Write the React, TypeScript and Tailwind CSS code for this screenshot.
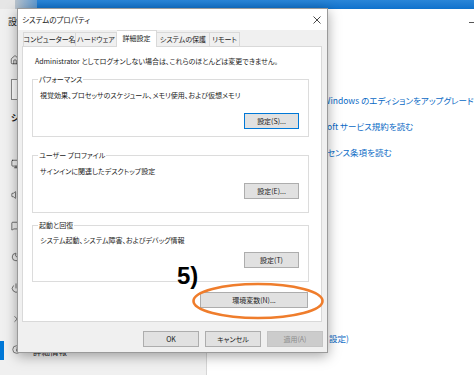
import { Home, Monitor, Volume2, MessageSquare, Moon, Power, ChevronRight, Info } from 'lucide-react';

function Btn({ label, className, focused, disabled }: { label: string; className: string; focused?: boolean; disabled?: boolean }) {
  return (
    <div
      className={`flex items-center justify-center h-[16px] border text-[7px] leading-none whitespace-nowrap ${
        disabled
          ? 'bg-[#cccccc] border-[#c4c4c4] text-[#8d8d8d]'
          : focused
          ? 'bg-[#e1e1e1] border-[#0078d7] text-[#1a1a1a]'
          : 'bg-[#e1e1e1] border-[#adadad] text-[#1a1a1a]'
      } ${className}`}
    >
      {label}
    </div>
  );
}

interface GroupProps {
  title: string;
  text: string;
  button: React.ReactNode;
  className: string;
  textClass: string;
  btnClass: string;
}

function Group({ title, text, button, className, textClass, btnClass }: GroupProps) {
  return (
    <div className={`relative ml-[9px] w-[277px] border border-[#dcdcdc] flex flex-col ${className}`}>
      <span className="absolute -top-[6px] left-[5px] bg-white px-[1px] text-[7px] leading-[10px] whitespace-nowrap">{title}</span>
      <p className={`ml-[7px] text-[7px] leading-[10px] whitespace-nowrap ${textClass}`}>{text}</p>
      <div className={`self-end mr-[9px] ${btnClass}`}>{button}</div>
    </div>
  );
}

// sidebar icons; their labels sit under the dialog and aren't visible
const navIcons = [Monitor, Volume2, MessageSquare, Moon, Power, ChevronRight];

const tabs = [
  { label: 'コンピューター名', w: 'w-[53px]' },
  { label: 'ハードウェア', w: 'w-[41px]' },
  { label: '詳細設定', w: 'w-[40px]', active: true },
  { label: 'システムの保護', w: 'w-[53px]' },
  { label: 'リモート', w: 'w-[30px]' },
];

export default function App() {
  return (
    <div className="relative w-[474px] h-[375px] overflow-hidden bg-white text-[#1a1a1a] font-['Noto_Sans_CJK_JP',sans-serif] [font-feature-settings:'palt']">
      {/* top strip */}
      <div className="flex h-[9px]">
        <div className="w-[15px] bg-[#e6e6e6]" />
        <div className="w-[22px] bg-gradient-to-r from-[#b9c3cc] to-[#5f9ad0]" />
        <div className="flex-1 bg-gradient-to-b from-[#2a86d8] to-[#0f72cc]" />
      </div>

      {/* settings window behind */}
      <div className="flex h-[366px]">
        <div className="w-[207px] bg-[#f0f0f0] border-r border-[#d6d6d6] flex flex-col">
          <div className="h-[26px] flex items-center pl-[8px] text-[9px]">設</div>
          <div className="mt-[15px] h-[20px] flex items-center pl-[10px]">
            <Home size={10} strokeWidth={1.4} />
          </div>
          <div className="mt-[9px] ml-[11px] w-[180px] h-[21px] border border-[#8a8a8a] bg-white" />
          <div className="mt-[13px] h-[10px] pl-[11px] text-[9px] leading-[10px] font-semibold">シ</div>
          <div className="mt-[25px] flex flex-col">
            {navIcons.map((Icon, i) => (
              <div key={i} className="h-[31px] flex items-center pl-[11px]">
                <Icon size={10} strokeWidth={1.4} />
              </div>
            ))}
            <div className="relative h-[31px] flex items-center pl-[12px] gap-[12px] text-[8.5px]">
              <div className="absolute left-0 top-[7px] w-[4px] h-[19px] bg-[#0078d7]" />
              <Info size={9} strokeWidth={1.4} />
              <span className="mt-[4px]">詳細情報</span>
            </div>
          </div>
        </div>

        <div className="flex-1 flex flex-col">
          <div className="h-[26px] flex items-center justify-end">
            <div className="w-[5px] h-px bg-[#555]" />
          </div>
          <div className="pl-[116px] flex flex-col text-[8.5px] leading-[10px] text-[#0a6ac5] whitespace-nowrap">
            <span className="mt-[60px]">Windows のエディションをアップグレード</span>
            <span className="mt-[16px] pl-[4px]">oft サービス規約を読む</span>
            <span className="mt-[16px] pl-[4px]">センス条項を読む</span>
            <span className="mt-[176px] pl-[6px]">設定)</span>
          </div>
        </div>
      </div>

      {/* System properties dialog */}
      <div className="absolute left-[17px] top-[8px] w-[311px] h-[345px] border border-[#9a9a9a] bg-[#f0f0f0] flex flex-col shadow-[0_3px_12px_rgba(0,0,0,0.35)]">
        <div className="h-[21px] bg-white flex items-center justify-between pl-[4px] pr-[6px]">
          <span className="text-[7.5px] leading-none">システムのプロパティ</span>
          <svg width="8" height="8" viewBox="0 0 8 8" className="text-[#333]">
            <path d="M0.5 0.5 L7.5 7.5 M7.5 0.5 L0.5 7.5" stroke="currentColor" strokeWidth="0.9" fill="none" />
          </svg>
        </div>

        <div className="mt-[1px] ml-[5px] h-[16px] flex items-end relative z-10 -mb-px text-[7px] leading-none whitespace-nowrap">
          {tabs.map((t, i) => (
            <div
              key={t.label}
              className={`${t.w} border border-b-0 border-[#d9d9d9] flex items-center justify-center ${i > 0 ? 'border-l-0' : ''} ${
                t.active ? 'h-[17px] pb-px bg-white' : 'h-[14px] mb-px'
              }`}
            >
              {t.label}
            </div>
          ))}
        </div>

        <div className="ml-[4px] w-[300px] h-[276px] bg-white border border-[#d9d9d9] flex flex-col">
          <p className="mt-[9px] ml-[12px] text-[7px] leading-[10px] whitespace-nowrap">
            Administrator としてログオンしない場合は、これらのほとんどは変更できません。
          </p>
          <Group
            title="パフォーマンス"
            text="視覚効果、プロセッサのスケジュール、メモリ使用、および仮想メモリ"
            className="mt-[13px] h-[58px]"
            textClass="mt-[10px]"
            btnClass="mt-[13px]"
            button={<Btn label="設定(S)..." className="w-[55px]" focused />}
          />
          <Group
            title="ユーザー プロファイル"
            text="サインインに関連したデスクトップ設定"
            className="mt-[18px] h-[58px]"
            textClass="mt-[10px]"
            btnClass="mt-[7px]"
            button={<Btn label="設定(E)..." className="w-[55px]" />}
          />
          <Group
            title="起動と回復"
            text="システム起動、システム障害、およびデバッグ情報"
            className="mt-[12px] h-[57px]"
            textClass="mt-[9px]"
            btnClass="mt-[7px]"
            button={<Btn label="設定(T)" className="w-[55px]" />}
          />
          <div className="mt-[10px] mr-[13px] self-end">
            <Btn label="環境変数(N)..." className="w-[108px]" />
          </div>
        </div>

        <div className="mt-[9px] mr-[4px] flex justify-end gap-[6px]">
          <Btn label="OK" className="w-[56px]" />
          <Btn label="キャンセル" className="w-[56px]" />
          <Btn label="適用(A)" className="w-[56px]" disabled />
        </div>
      </div>

      {/* annotation */}
      <div className="absolute left-[177px] top-[264px] text-[24px] leading-[24px] font-bold text-black font-['Liberation_Sans',Arial,sans-serif] [font-feature-settings:normal]">
        5)
      </div>
      <svg className="absolute left-[190px] top-[281px]" width="136" height="40" viewBox="0 0 136 40">
        <ellipse cx="68" cy="20" rx="64.5" ry="17" fill="none" stroke="#ef7d2c" strokeWidth="2.6" />
      </svg>
    </div>
  );
}
